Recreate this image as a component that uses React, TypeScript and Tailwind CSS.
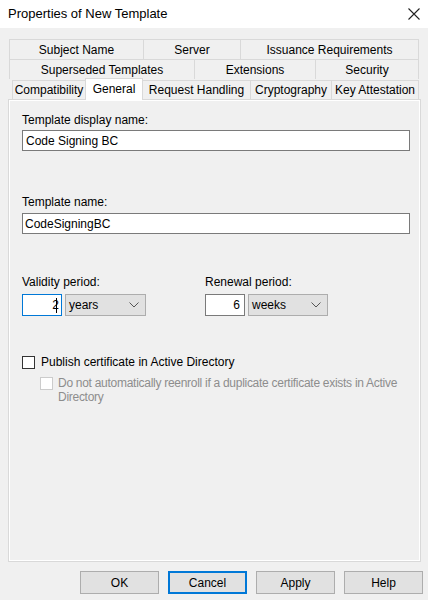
import React from 'react';

const font = "font-['Segoe_UI','Liberation_Sans',Arial,sans-serif]";

const Tab: React.FC<{ label: string; w: string; last?: boolean }> = ({ label, w, last }) => (
  <div
    className={`${w} h-[20px] flex items-center justify-center border-t border-l ${last ? 'border-r' : ''} border-[#d9d9d9] bg-[#f0f0f0] text-[12px] text-black whitespace-nowrap`}
  >
    {label}
  </div>
);

const Chevron: React.FC = () => (
  <svg width="10" height="6" viewBox="0 0 10 6" className="shrink-0">
    <path d="M0.5 0.5 L5 5 L9.5 0.5" fill="none" stroke="#555" strokeWidth="1" />
  </svg>
);

const Select: React.FC<{ value: string; w: string }> = ({ value, w }) => (
  <div className={`${w} h-[22px] flex items-center justify-between pl-[3px] pr-[6px] bg-[#e1e1e1] border border-[#adadad] text-[12px]`}>
    <span>{value}</span>
    <Chevron />
  </div>
);

const Button: React.FC<{ label: string; focused?: boolean }> = ({ label, focused }) => (
  <div
    className={`w-[79px] h-[23px] flex items-center justify-center bg-[#e1e1e1] text-[12px] ${
      focused ? 'border-2 border-[#0078d7]' : 'border border-[#adadad]'
    }`}
  >
    {label}
  </div>
);

export default function App() {
  return (
    <div className={`w-[428px] h-[600px] bg-[#f0f0f0] text-black ${font} overflow-hidden`}>
      {/* Title bar */}
      <div className="h-[28px] bg-white flex items-center justify-between pl-[8px] pr-[8px]">
        <span className="text-[13px]">Properties of New Template</span>
        <svg width="12" height="12" viewBox="0 0 12 12">
          <path d="M0.5 0.5 L11.5 11.5 M11.5 0.5 L0.5 11.5" stroke="#222" strokeWidth="1.1" />
        </svg>
      </div>

      <div className="pt-[11px] pl-[8px]">
        {/* Tabs */}
        <div className="pl-[1px] w-[412px]">
          <div className="flex">
            <Tab label="Subject Name" w="w-[134px]" />
            <Tab label="Server" w="w-[97px]" />
            <Tab label="Issuance Requirements" w="w-[179px]" last />
          </div>
          <div className="flex">
            <Tab label="Superseded Templates" w="w-[185px]" />
            <Tab label="Extensions" w="w-[121px]" />
            <Tab label="Security" w="w-[104px]" last />
          </div>
          <div className="flex items-end h-[20px]">
            <div className="w-[3px]" />
            <div className="w-[73px] h-[19px] flex items-center justify-center border-t border-l border-[#d9d9d9] text-[12px] whitespace-nowrap">
              Compatibility
            </div>
            <div className="w-[58px] h-[22px] -mb-[1px] relative z-10 flex items-start pt-[1px] justify-center bg-white border-t border-l border-r border-[#d9d9d9] text-[12px]">
              General
            </div>
            <div className="w-[107px] h-[19px] flex items-center justify-center border-t border-[#d9d9d9] text-[12px] whitespace-nowrap">
              Request Handling
            </div>
            <div className="w-[81px] h-[19px] flex items-center justify-center border-t border-l border-[#d9d9d9] text-[12px] whitespace-nowrap">
              Cryptography
            </div>
            <div className="w-[88px] h-[19px] flex items-center justify-center border-t border-l border-r border-[#d9d9d9] text-[12px] whitespace-nowrap">
              Key Attestation
            </div>
          </div>
        </div>

        {/* Panel */}
        <div className="w-[413px] h-[463px] border border-[#d9d9d9]">
          <div className="h-full border border-white bg-[#f0f0f0] pl-[12px] pr-[11px] pt-[11px] text-[12px]">
            <div className="leading-[16px] mb-[2px]">Template display name:</div>
            <div className="h-[21px] w-[388px] border border-[#7a7a7a] bg-white flex items-center px-[3px]">
              Code Signing BC
            </div>

            <div className="leading-[16px] mb-[3px] mt-[43px]">Template name:</div>
            <div className="h-[21px] w-[388px] border border-[#7a7a7a] bg-white flex items-center px-[2px]">
              CodeSigningBC
            </div>

            <div className="flex mt-[40px]">
              <div className="w-[183px]">
                <div className="leading-[16px] mb-[4px]">Validity period:</div>
                <div className="flex gap-[3px]">
                  <div className="w-[40px] h-[22px] border border-[#0078d7] bg-white flex items-center justify-end pr-[4px]">
                    <span>2</span>
                    <span className="w-px h-[15px] bg-black -ml-[3px]" />
                  </div>
                  <Select value="years" w="w-[81px]" />
                </div>
              </div>
              <div>
                <div className="leading-[16px] mb-[4px]">Renewal period:</div>
                <div className="flex gap-[3px]">
                  <div className="w-[40px] h-[22px] border border-[#7a7a7a] bg-white flex items-center justify-end pr-[4px]">
                    6
                  </div>
                  <Select value="weeks" w="w-[80px]" />
                </div>
              </div>
            </div>

            <div className="flex items-center gap-[6px] mt-[38px]">
              <div className="w-[13px] h-[13px] border border-[#333] bg-white" />
              <span className="leading-[16px]">Publish certificate in Active Directory</span>
            </div>
            <div className="flex gap-[5px] mt-[6px] pl-[18px] text-[#8d8d8d]">
              <div className="w-[13px] h-[13px] border border-[#cccccc] bg-white mt-[1px] shrink-0" />
              <span className="leading-[14px] tracking-[-0.28px]">
                Do not automatically reenroll if a duplicate certificate exists in Active Directory
              </span>
            </div>
          </div>
        </div>

        {/* Buttons */}
        <div className="flex justify-end gap-[9px] pr-[5px] mt-[9px] w-[420px]">
          <Button label="OK" />
          <Button label="Cancel" focused />
          <Button label="Apply" />
          <Button label="Help" />
        </div>
      </div>
    </div>
  );
}
